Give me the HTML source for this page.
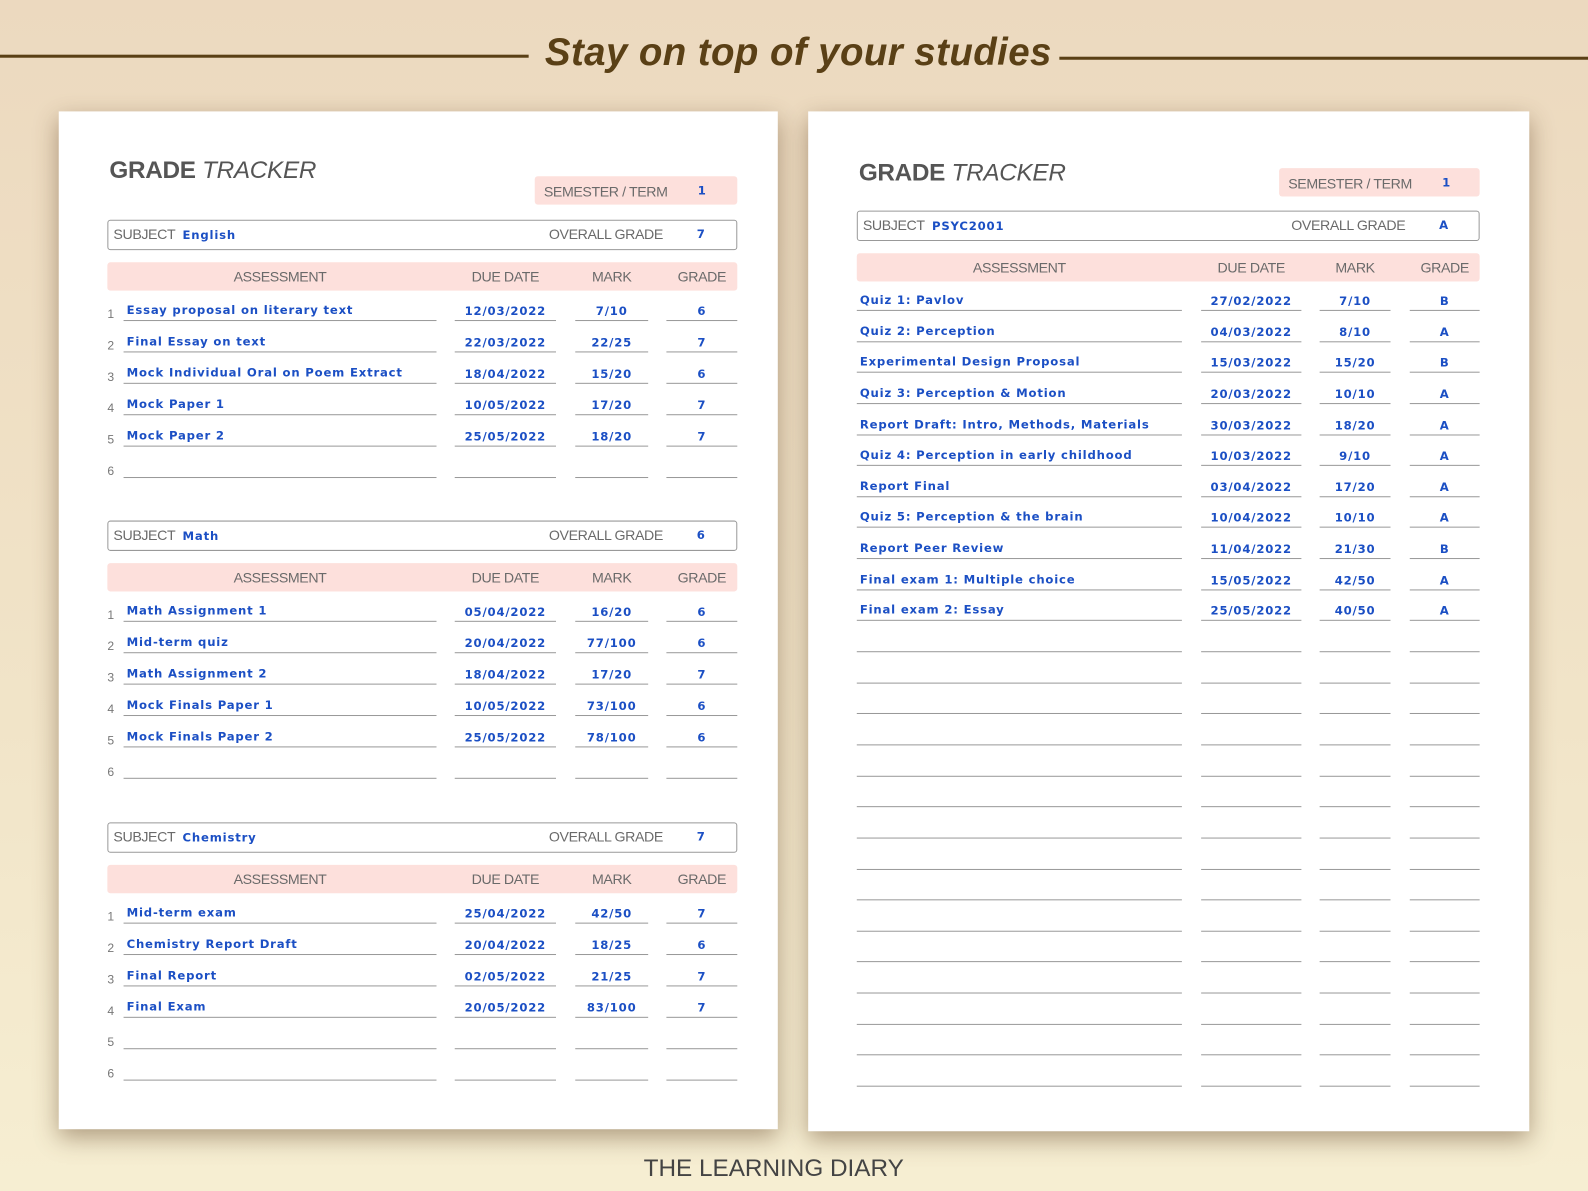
<!DOCTYPE html>
<html><head><meta charset="utf-8">
<style>
*{margin:0;padding:0;box-sizing:border-box}
body{width:1588px;height:1191px;overflow:hidden;position:relative;background:linear-gradient(#ecd9bf,#f1e4c8 60%,#f6eed2);font-family:"Liberation Sans",sans-serif}
#w{position:absolute;left:0;top:0;width:1568px;height:1176px;transform:scale(1.01276);transform-origin:0 0}
.a{position:absolute}
.pg{position:absolute;background:#fff;box-shadow:0 8px 22px rgba(90,60,30,.45)}
.ttl{font-size:24px;color:#555;letter-spacing:-.3px}
.ttl b{font-weight:bold}.ttl i{font-weight:normal}
.pink{background:#fde0dc;border-radius:3px}
.box{border:1.5px solid #999;border-radius:3px}
.g{color:#6a6a6a;font-size:14px;letter-spacing:-.4px}
.bl{color:#1b4fc4;font-size:11.5px;font-weight:bold;font-family:"DejaVu Sans",sans-serif;letter-spacing:.8px}
.ln{position:absolute;height:1px;background:#999}
</style></head><body>
<div id="w">
<div class="a" style="left:0;top:54px;width:522px;height:3px;background:#5a4016"></div>
<div class="a" style="left:1046px;top:56px;width:522px;height:3px;background:#5a4016"></div>
<div class="a" style="left:538px;top:31px;font-size:38px;font-style:italic;font-weight:bold;color:#5a4016;letter-spacing:.4px;white-space:nowrap">Stay on top of your studies</div>
<div class="pg" style="left:58px;top:110px;width:710px;height:1005px"></div>
<div class="pg" style="left:798px;top:110px;width:712px;height:1007px"></div>
<div class="a" style="left:0;top:1140px;width:1528px;text-align:center;font-size:24px;color:#444">THE LEARNING DIARY</div>
<div id="c"></div>
</div>
<script>
var h='';
function add(s){h+=s}
function page(L,R,ty){
 add('<div class="a ttl" style="left:'+(L+2)+'px;top:'+ty+'px"><b>GRADE</b> <i>TRACKER</i></div>');
}
function sect(L,R,by,rows,n,cols,name,grade,firstLine,sp,nums){
 var W=R-L;
 add('<div class="a box" style="left:'+L+'px;top:'+by+'px;width:'+W+'px;height:30px"></div>');
 add('<div class="a g" style="left:'+(L+6)+'px;top:'+(by+6)+'px">SUBJECT <span class="bl" style="margin-left:4px">'+name+'</span></div>');
 add('<div class="a g" style="left:'+(R-186)+'px;top:'+(by+6)+'px">OVERALL GRADE</div>');
 add('<div class="a bl" style="left:'+(R-40)+'px;top:'+(by+7)+'px">'+grade+'</div>');
 var hy=by+42;
 add('<div class="a pink" style="left:'+L+'px;top:'+hy+'px;width:'+W+'px;height:28px"></div>');
 var hd=['ASSESSMENT','DUE DATE','MARK','GRADE'];
 for(var k=0;k<4;k++){add('<div class="a g" style="left:'+cols[k][0]+'px;width:'+(cols[k][1]-cols[k][0])+'px;top:'+(hy+6)+'px;text-align:center">'+hd[k]+'</div>');}
 for(var i=0;i<n;i++){
  var y=Math.round(firstLine+i*sp);
  if(nums)add('<div class="a" style="left:'+(L)+'px;top:'+(y-13)+'px;font-size:12px;color:#777">'+(i+1)+'</div>');
  for(var k=0;k<4;k++){
   add('<div class="ln" style="left:'+cols[k][0]+'px;width:'+(cols[k][1]-cols[k][0])+'px;top:'+y+'px"></div>');
   var r=rows[i];
   if(r){
    if(k==0)add('<div class="a bl" style="left:'+(cols[0][0]+3)+'px;top:'+(y-17)+'px">'+r[0]+'</div>');
    else add('<div class="a bl" style="left:'+cols[k][0]+'px;width:'+(cols[k][1]-cols[k][0])+'px;text-align:center;top:'+(y-16)+'px">'+r[k]+'</div>');
   }
  }
 }
}
var LC=[[122,431],[449,549],[568,640],[658,728]];
page(106,728,155);
add('<div class="a pink" style="left:528px;top:174px;width:200px;height:28px"></div><div class="a g" style="left:537px;top:181px">SEMESTER / TERM</div><div class="a bl" style="left:689px;top:181px">1</div>');
sect(106,728,217,[["Essay proposal on literary text","12/03/2022","7/10","6"],["Final Essay on text","22/03/2022","22/25","7"],["Mock Individual Oral on Poem Extract","18/04/2022","15/20","6"],["Mock Paper 1","10/05/2022","17/20","7"],["Mock Paper 2","25/05/2022","18/20","7"]],6,LC,"English","7",316,31,true);
sect(106,728,514,[["Math Assignment 1","05/04/2022","16/20","6"],["Mid-term quiz","20/04/2022","77/100","6"],["Math Assignment 2","18/04/2022","17/20","7"],["Mock Finals Paper 1","10/05/2022","73/100","6"],["Mock Finals Paper 2","25/05/2022","78/100","6"]],6,LC,"Math","6",613,31,true);
sect(106,728,812,[["Mid-term exam","25/04/2022","42/50","7"],["Chemistry Report Draft","20/04/2022","18/25","6"],["Final Report","02/05/2022","21/25","7"],["Final Exam","20/05/2022","83/100","7"]],6,LC,"Chemistry","7",911,31,true);
var RC=[[846,1167],[1186,1285],[1303,1373],[1392,1461]];
page(846,1461,157);
add('<div class="a pink" style="left:1263px;top:166px;width:198px;height:28px"></div><div class="a g" style="left:1272px;top:173px">SEMESTER / TERM</div><div class="a bl" style="left:1424px;top:173px">1</div>');
sect(846,1461,208,[["Quiz 1: Pavlov","27/02/2022","7/10","B"],["Quiz 2: Perception","04/03/2022","8/10","A"],["Experimental Design Proposal","15/03/2022","15/20","B"],["Quiz 3: Perception &amp; Motion","20/03/2022","10/10","A"],["Report Draft: Intro, Methods, Materials","30/03/2022","18/20","A"],["Quiz 4: Perception in early childhood","10/03/2022","9/10","A"],["Report Final","03/04/2022","17/20","A"],["Quiz 5: Perception &amp; the brain","10/04/2022","10/10","A"],["Report Peer Review","11/04/2022","21/30","B"],["Final exam 1: Multiple choice","15/05/2022","42/50","A"],["Final exam 2: Essay","25/05/2022","40/50","A"]],26,RC,"PSYC2001","A",306,30.64,false);
document.getElementById('c').innerHTML=h;
</script>
</body></html>
